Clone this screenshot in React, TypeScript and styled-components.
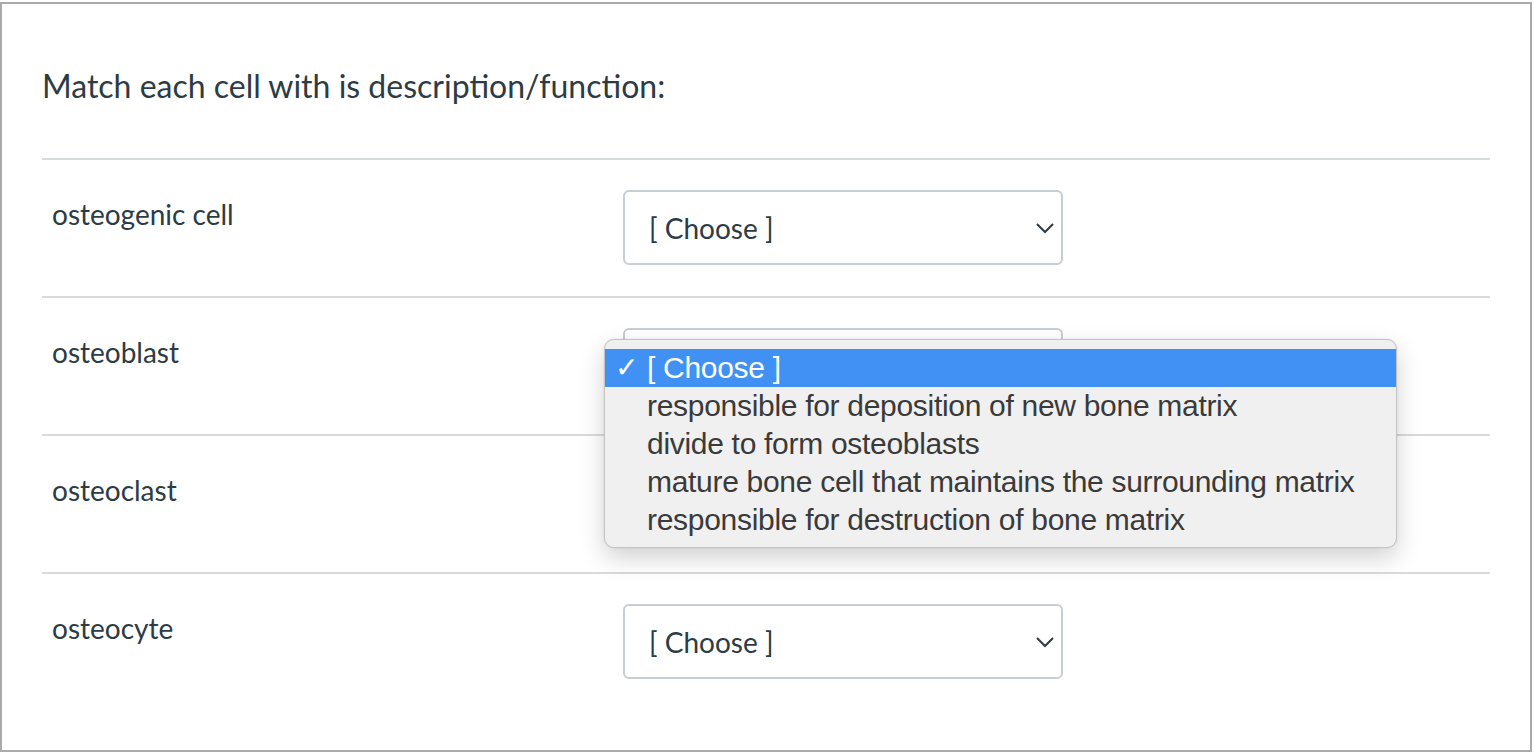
import styled, { createGlobalStyle } from "styled-components";

const GlobalStyle = createGlobalStyle`
    html, body {
        margin: 0;
        padding: 0;
        background: #ffffff;
    }
    body {
        font-family: Lato, "Noto Sans", sans-serif;
        color: #2d3b45;
    }
`;

const Page = styled.div`
    padding-top: 2px;
`;

const Frame = styled.div`
    box-sizing: border-box;
    width: 1532px;
    height: 750px;
    border: 2px solid #aaaaaa;
    padding: 0 40px;
`;

const Title = styled.h1`
    margin: 0;
    padding: 63px 0 53px;
    font-size: 32px;
    line-height: 38px;
    font-weight: 400;
    color: #2d3b45;
`;

const Row = styled.div`
    position: relative;
    display: flex;
    border-top: 2px solid #d8dbde;
    padding: 30px 0 31px;
`;

const Label = styled.div`
    box-sizing: border-box;
    width: 581px;
    padding: 8px 0 0 10px;
    font-size: 28px;
    line-height: 1.2;
    color: #2d3b45;
`;

const SelectWrap = styled.div`
    position: relative;
`;

const SelectBox = styled.div`
    box-sizing: border-box;
    display: flex;
    align-items: center;
    justify-content: space-between;
    width: 440px;
    height: 75px;
    padding: 0 6px 0 24px;
    border: 2px solid #c7cdd1;
    border-radius: 6px;
    background: #ffffff;
    font-size: 28px;
    color: #2d3b45;
`;

const Chevron = styled.svg`
    width: 20px;
    height: 12px;
`;

const Menu = styled.ul`
    position: absolute;
    top: 11px;
    left: -19px;
    box-sizing: border-box;
    width: 793px;
    margin: 0;
    padding: 9px 0 8px;
    list-style: none;
    background: #f0f0f0;
    border: 1px solid #c4c4c4;
    border-radius: 10px;
    box-shadow: 0 10px 24px rgba(0, 0, 0, 0.18), 0 0 2px rgba(0, 0, 0, 0.12);
    font-family: "Liberation Sans", Arial, sans-serif;
    z-index: 10;
`;

const MenuItem = styled.li<{ $active?: boolean }>`
    position: relative;
    height: 38px;
    line-height: 38px;
    padding-left: 42px;
    font-size: 30px;
    letter-spacing: -0.3px;
    white-space: nowrap;
    color: ${(p) => (p.$active ? "#ffffff" : "#3a3a3a")};
    background: ${(p) => (p.$active ? "#4191f5" : "transparent")};
`;

const Check = styled.span`
    position: absolute;
    left: 10px;
    top: 0;
    font-size: 28px;
`;

const options = [
    "[ Choose ]",
    "responsible for deposition of new bone matrix",
    "divide to form osteoblasts",
    "mature bone cell that maintains the surrounding matrix",
    "responsible for destruction of bone matrix",
];

const cells = ["osteogenic cell", "osteoblast", "osteoclast", "osteocyte"];

function Select({ open }: { open?: boolean }) {
    return (
        <SelectWrap>
            <SelectBox>
                <span>[ Choose ]</span>
                <Chevron viewBox="0 0 20 12">
                    <path d="M2 2 L10 10 L18 2" fill="none" stroke="#2d3b45" strokeWidth="2" />
                </Chevron>
            </SelectBox>
            {open && (
                <Menu>
                    {options.map((o, i) => (
                        <MenuItem key={o} $active={i === 0}>
                            {i === 0 && <Check>✓</Check>}
                            {o}
                        </MenuItem>
                    ))}
                </Menu>
            )}
        </SelectWrap>
    );
}

export default function App() {
    return (
        <Page>
            <GlobalStyle />
            <Frame>
                <Title>Match each cell with is description/function:</Title>
                {cells.map((c, i) => (
                    <Row key={c}>
                        <Label>{c}</Label>
                        <Select open={i === 1} />
                    </Row>
                ))}
            </Frame>
        </Page>
    );
}
